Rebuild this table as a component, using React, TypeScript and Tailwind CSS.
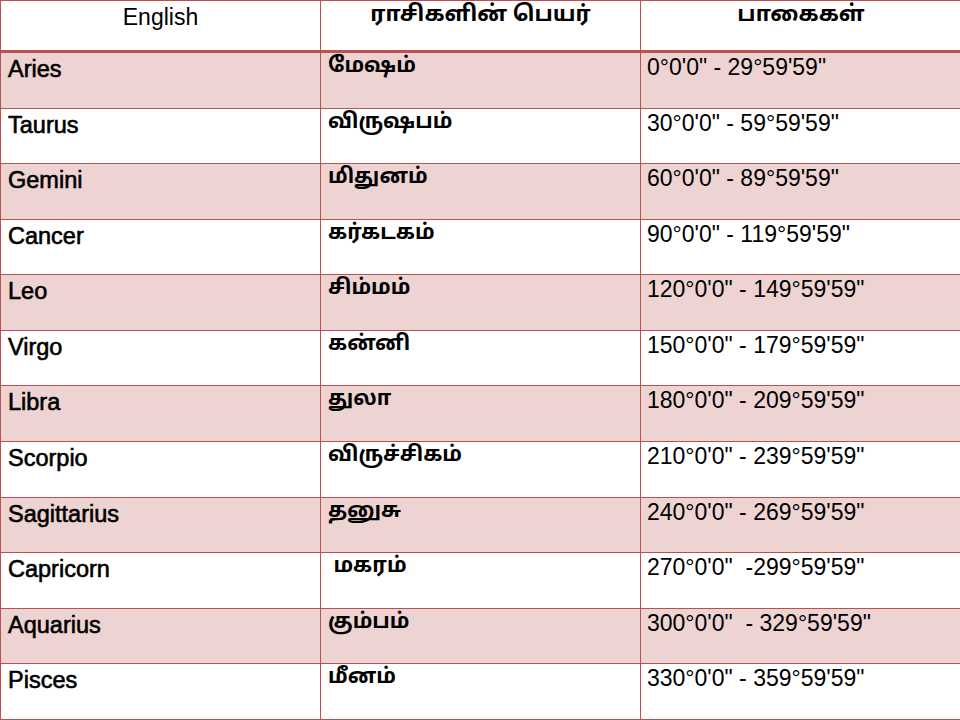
const rows: [string, string, string][] = [
  ['Aries', 'மேஷம்', `0°0'0" - 29°59'59"`],
  ['Taurus', 'விருஷபம்', `30°0'0" - 59°59'59"`],
  ['Gemini', 'மிதுனம்', `60°0'0" - 89°59'59"`],
  ['Cancer', 'கர்கடகம்', `90°0'0" - 119°59'59"`],
  ['Leo', 'சிம்மம்', `120°0'0" - 149°59'59"`],
  ['Virgo', 'கன்னி', `150°0'0" - 179°59'59"`],
  ['Libra', 'துலா', `180°0'0" - 209°59'59"`],
  ['Scorpio', 'விருச்சிகம்', `210°0'0" - 239°59'59"`],
  ['Sagittarius', 'தனுசு', `240°0'0" - 269°59'59"`],
  ['Capricorn', '\u00a0மகரம்', `270°0'0"\u00a0 -299°59'59"`],
  ['Aquarius', 'கும்பம்', `300°0'0"\u00a0 - 329°59'59"`],
  ['Pisces', 'மீனம்', `330°0'0" - 359°59'59"`],
];

const arial = { fontFamily: '"Liberation Sans", Arial, sans-serif' };
const tamil = { fontFamily: '"Noto Sans Tamil", "Latha", "Lohit Tamil", "Liberation Sans", sans-serif' };

export default function App() {
  return (
    <div className="w-[960px] h-[720px] bg-white flex flex-col text-black overflow-hidden" style={arial}>
      {/* Header */}
      <div className="h-[53px] shrink-0 grid grid-cols-[320px_320px_320px] border-t border-l border-[#b8514f] border-b-[3px]">
        <div className="border-r border-[#b8514f] text-center text-[23px] pt-[3px] leading-[26px]">English</div>
        <div className="border-r border-[#b8514f] text-center text-[22px] font-bold pt-[2px] leading-[26px]" style={tamil}>
          ராசிகளின் பெயர்
        </div>
        <div className="text-center text-[22px] font-bold pt-[2px] leading-[26px]" style={tamil}>
          பாகைகள்
        </div>
      </div>

      {/* Rows */}
      {rows.map(([en, ta, deg], i) => (
        <div
          key={en}
          className={
            'flex-1 grid grid-cols-[320px_320px_320px] border-l border-b border-[#b8514f] ' +
            (i % 2 === 0 ? 'bg-[#eed3d3]' : 'bg-white')
          }
        >
          <div className="border-r border-[#b8514f] pl-[7px] pt-[3px] text-[23.5px] leading-[26px] [-webkit-text-stroke:0.6px_black]">
            {en}
          </div>
          <div className="border-r border-[#b8514f] pl-[7px] pt-[1px] text-[21px] font-bold leading-[26px]" style={tamil}>
            {ta}
          </div>
          <div className="pl-[6px] pt-[1px] text-[23px] leading-[26px] whitespace-pre">{deg}</div>
        </div>
      ))}
    </div>
  );
}
